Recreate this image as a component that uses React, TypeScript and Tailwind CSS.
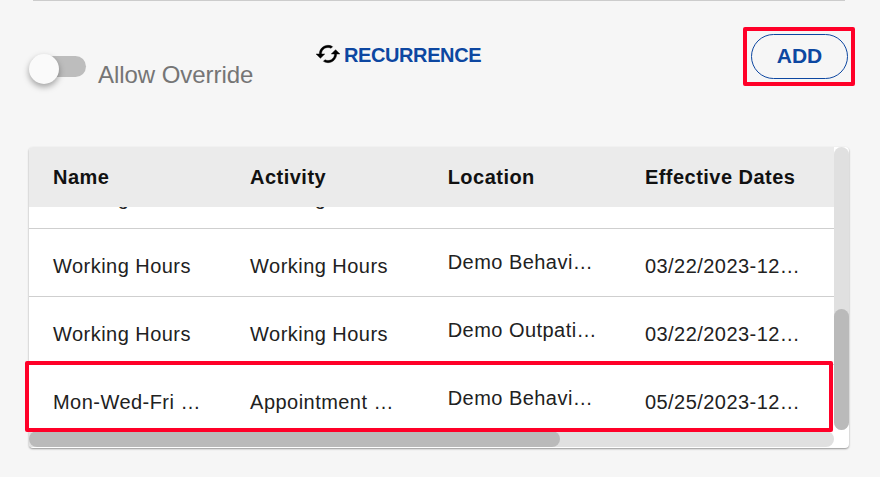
import React from "react";

const font = { fontFamily: '"Liberation Sans", Arial, sans-serif' };

const rows = [
  ["Working Hours", "Working Hours", "Demo Behavi…", "03/22/2023-12…"],
  ["Working Hours", "Working Hours", "Demo Behavi…", "03/22/2023-12…"],
  ["Working Hours", "Working Hours", "Demo Outpati…", "03/22/2023-12…"],
  ["Mon-Wed-Fri …", "Appointment …", "Demo Behavi…", "05/25/2023-12…"],
];

function Row({ cells }: { cells: string[] }) {
  return (
    <div className="grid grid-cols-[197.1px_197.6px_197.2px_197.2px] h-[68px] shrink-0 border-b border-[#cfcfcf] pl-6 text-[20px] tracking-[0.46px] text-[#212121]">
      <div className="pt-[25px] leading-[24px] whitespace-nowrap">{cells[0]}</div>
      <div className="pt-[25px] leading-[24px] whitespace-nowrap">{cells[1]}</div>
      <div className="pt-[21px] leading-[24px] whitespace-nowrap">{cells[2]}</div>
      <div className="pt-[25px] leading-[24px] whitespace-nowrap">{cells[3]}</div>
    </div>
  );
}

export default function App() {
  return (
    <div style={font} className="relative w-[880px] h-[477px] overflow-hidden bg-[#f6f6f6]">
      <div className="ml-[33px] w-[812px] h-px bg-[#cccccc]" />

      <div className="flex h-[146px] items-start">
        <div className="relative ml-[29px] mt-[54px] flex items-start">
          <div className="ml-[1px] mt-[1px] w-[56px] h-[21px] rounded-full bg-[#bdbdbd]" />
          <div className="absolute left-0 -top-[1px] w-[30px] h-[30px] rounded-full bg-[#fafafa] shadow-[0_3px_6px_rgba(0,0,0,0.35)]" />
          <span className="ml-[12px] mt-[6px] text-[24px] leading-[28px] tracking-[-0.05px] text-[#757575] whitespace-nowrap">Allow Override</span>
        </div>

        <div className="absolute left-[315px] top-[43px] flex items-center gap-[3px]">
          <svg width="26" height="26" viewBox="0 0 24 24" fill="#000000" stroke="#000000" strokeWidth="0.4" className="-mt-[2px]">
            <path d="M12 4V1L8 5l4 4V6c3.31 0 6 2.69 6 6 0 1.01-.25 1.97-.7 2.8l1.46 1.46C19.54 15.03 20 13.57 20 12c0-4.42-3.58-8-8-8zm0 14c-3.31 0-6-2.69-6-6 0-1.01.25-1.97.7-2.8L5.24 7.74C4.46 8.97 4 10.43 4 12c0 4.42 3.58 8 8 8v3l4-4-4-4v3z" transform="rotate(90 12 12)" />
          </svg>
          <span className="text-[20px] leading-[24px] font-bold tracking-[-0.4px] text-[#0d47a1] whitespace-nowrap">RECURRENCE</span>
        </div>

        <div className="absolute left-[743px] top-[27px] w-[112px] h-[59px] rounded-[2px] border-[4px] border-[#ff0028] flex items-center justify-center">
          <button className="w-[97px] h-[45px] -mt-[1px] pl-[1px] rounded-full border border-[#0d47a1] text-[21px] font-bold text-[#0d47a1]">ADD</button>
        </div>
      </div>

      <div className="ml-[29px] w-[820px] h-[301px] rounded-[4px] bg-white shadow-[0_1px_2px_rgba(0,0,0,0.4)] flex overflow-hidden">
        <div className="w-[805px] flex flex-col">
          <div className="relative z-10 grid grid-cols-[197.1px_197.6px_197.2px_197.2px] h-[60px] shrink-0 items-center pl-6 bg-[#ebebeb] text-[20px] font-bold tracking-[0.47px] text-[#111111] whitespace-nowrap">
            <div>Name</div>
            <div>Activity</div>
            <div>Location</div>
            <div>Effective Dates</div>
          </div>
          <div className="h-[224px] overflow-hidden bg-white">
            <div className="flex flex-col -mt-[46px]">
              {rows.map((r, i) => (
                <Row key={i} cells={r} />
              ))}
            </div>
          </div>
          <div className="h-[16px] bg-[#e0e0e0] rounded-r-full">
            <div className="w-[531px] h-full rounded-full bg-[#bababa]" />
          </div>
        </div>
        <div className="w-[15px] h-[283px] bg-[#e0e0e0] rounded-full flex flex-col justify-end">
          <div className="w-full h-[121px] rounded-full bg-[#bababa]" />
        </div>
      </div>

      <div className="absolute left-[25px] top-[361px] w-[808px] h-[71px] rounded-[2px] border-[4px] border-[#ff0028]" />
    </div>
  );
}
